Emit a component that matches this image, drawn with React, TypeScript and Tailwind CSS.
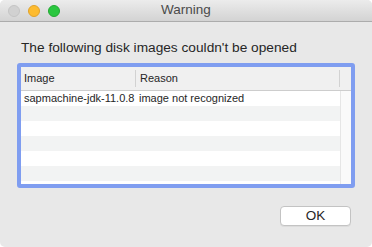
export default function App() {
  const rows = [
    { image: "sapmachine-jdk-11.0.8", reason: "image not recognized" },
    { image: "", reason: "" },
    { image: "", reason: "" },
    { image: "", reason: "" },
    { image: "", reason: "" },
    { image: "", reason: "" },
  ];

  return (
    <div className="h-[247px] w-[372px] bg-white font-['Liberation_Sans',Arial,sans-serif] text-[#262626]">
      <div className="flex h-full flex-col overflow-hidden rounded-[5px] bg-[#e8e8e8]">
        {/* title bar */}
        <div className="relative flex h-[22px] shrink-0 items-center border-b border-[#acacac] bg-gradient-to-b from-[#ececec] to-[#d3d3d3]">
          <div className="ml-[8px] flex gap-[8px]">
            <span className="h-[12px] w-[12px] rounded-full border border-[#c4c4c4] bg-[#d1d1d1]" />
            <span className="h-[12px] w-[12px] rounded-full border border-[#e0a22a] bg-[#fdbb2f]" />
            <span className="h-[12px] w-[12px] rounded-full border border-[#23a832] bg-[#2ac73f]" />
          </div>
          <div className="absolute inset-0 flex items-center justify-center text-[13.5px] text-[#4a4a4a]">
            Warning
          </div>
        </div>

        <p className="ml-[21px] mt-[18px] text-[13.7px] leading-[16px]">
          The following disk images couldn't be opened
        </p>

        {/* table */}
        <div className="ml-[17px] mt-[7px] h-[125px] w-[338px] rounded-[3px] border-[4px] border-[#7f9df0]">
          <div className="flex h-full flex-col overflow-hidden bg-white">
            <div className="flex h-[24px] shrink-0 items-center border-b border-[#cdcdcd] bg-[#f0f0f0] text-[11px]">
              <div className="flex h-full w-[114px] items-center pl-[3px]">Image</div>
              <div className="h-[17px] w-px bg-[#d2d2d2]" />
              <div className="flex h-full w-[203px] items-center pl-[4px]">Reason</div>
              <div className="h-[17px] w-px bg-[#d2d2d2]" />
              <div className="flex-1" />
            </div>
            <div className="flex flex-1">
              <div className="flex-1">
                {rows.map((r, i) => (
                  <div
                    key={i}
                    className={`flex h-[15px] items-center text-[11px] ${i % 2 === 1 ? "bg-[#f2f3f3]" : "bg-white"}`}
                  >
                    <div className="w-[115px] pl-[3px]">{r.image}</div>
                    <div className="pl-[3px]">{r.reason}</div>
                  </div>
                ))}
              </div>
              <div className="w-[11px] border-l border-[#e6e6e6] bg-[#fafafa]" />
            </div>
          </div>
        </div>

        <div className="mt-[18px] flex justify-end pr-[21px]">
          <button className="h-[20px] w-[71px] rounded-[4px] border border-[#c3c3c3] bg-white text-[13.5px] leading-none shadow-[0_1px_0_rgba(0,0,0,0.05)]">
            OK
          </button>
        </div>
      </div>
    </div>
  );
}
